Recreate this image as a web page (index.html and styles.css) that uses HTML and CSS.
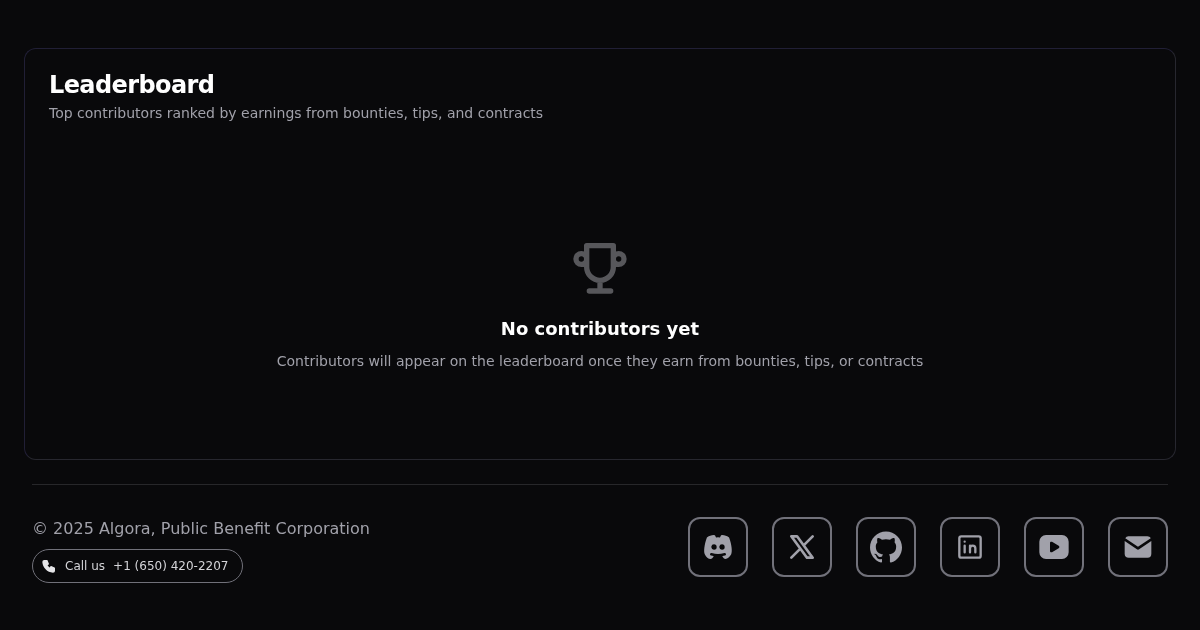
FILE: index.html
```html
<!DOCTYPE html>
<html lang="en">
<head>
    <meta charset="UTF-8">
    <meta name="viewport" content="width=device-width, initial-scale=1.0">
    <title>Leaderboard</title>
    <link rel="stylesheet" href="styles.css">
</head>
<body>
    <main class="page">
        <section class="card">
            <h1>Leaderboard</h1>
            <p class="subtitle">Top contributors ranked by earnings from bounties, tips, and contracts</p>
            <div class="empty">
                <svg class="trophy" viewBox="0 0 24 24" fill="none" stroke="currentColor" stroke-width="2" stroke-linecap="round" stroke-linejoin="round">
                    <path d="M8 21h8M12 17v4M7 4h10M17 4v8a5 5 0 0 1 -10 0v-8M3 9a2 2 0 1 0 4 0a2 2 0 1 0 -4 0M17 9a2 2 0 1 0 4 0a2 2 0 1 0 -4 0"/>
                </svg>
                <h2>No contributors yet</h2>
                <p>Contributors will appear on the leaderboard once they earn from bounties, tips, or contracts</p>
            </div>
        </section>
    </main>

    <footer class="footer">
        <div class="footer-inner">
            <div class="contact">
                <div class="copyright">© 2025 Algora, Public Benefit Corporation</div>
                <a class="call" href="#">
                    <svg class="phone" viewBox="0 0 24 24" fill="currentColor"><path d="M9 3a1 1 0 0 1 .877 .519l.051 .11l2 5a1 1 0 0 1 -.313 1.16l-.1 .068l-1.674 1.004l.063 .103a10 10 0 0 0 3.132 3.132l.102 .062l1.005 -1.672a1 1 0 0 1 1.113 -.453l.115 .039l5 2a1 1 0 0 1 .622 .807l.007 .121v4c0 1.657 -1.343 3 -3.06 2.998c-8.579 -.521 -15.418 -7.36 -15.94 -15.998a3 3 0 0 1 2.824 -2.995l.176 -.005h4z"/></svg>
                    <span>Call us</span>
                    <span>+1 (650) 420-2207</span>
                </a>
            </div>
            <nav class="socials">
                <a class="social" href="#" aria-label="Discord">
                    <svg viewBox="0 0 24 24" fill="currentColor"><path d="M14.983 3l.123 .006c2.014 .214 3.527 .672 4.966 1.673a1 1 0 0 1 .371 .488c1.876 5.315 2.373 9.987 1.451 12.28c-1.003 2.005 -2.606 3.553 -4.394 3.553c-.732 0 -1.693 -.968 -2.328 -2.045a21.512 21.512 0 0 0 2.103 -.493a1 1 0 1 0 -.55 -1.924c-3.32 .95 -6.13 .95 -9.45 0a1 1 0 0 0 -.55 1.924c.717 .204 1.416 .37 2.103 .494c-.635 1.076 -1.596 2.044 -2.328 2.044c-1.788 0 -3.391 -1.548 -4.428 -3.629c-.888 -2.217 -.39 -6.89 1.485 -12.204a1 1 0 0 1 .371 -.488c1.439 -1.001 2.952 -1.459 4.966 -1.673a1 1 0 0 1 .935 .435l.063 .107l.651 1.285l.137 -.016a12.97 12.97 0 0 1 2.643 0l.134 .016l.65 -1.284a1 1 0 0 1 .754 -.54l.122 -.009zm-5.983 7a2 2 0 0 0 -1.977 1.697l-.018 .154l-.005 .149l.005 .15a2 2 0 1 0 1.995 -2.15zm6 0a2 2 0 0 0 -1.977 1.697l-.018 .154l-.005 .149l.005 .15a2 2 0 1 0 1.995 -2.15z"/></svg>
                </a>
                <a class="social" href="#" aria-label="X">
                    <svg viewBox="0 0 24 24" fill="none" stroke="currentColor" stroke-width="2" stroke-linecap="round" stroke-linejoin="round"><path d="M4 4l11.733 16h4.267l-11.733 -16zM4 20l6.768 -6.768m2.46 -2.46l6.772 -6.772"/></svg>
                </a>
                <a class="social" href="#" aria-label="GitHub">
                    <svg viewBox="0 0 24 24" fill="currentColor"><path d="M12 .297c-6.63 0-12 5.373-12 12 0 5.303 3.438 9.8 8.205 11.385.6.113.82-.258.82-.577 0-.285-.01-1.04-.015-2.04-3.338.724-4.042-1.61-4.042-1.61C4.422 18.07 3.633 17.7 3.633 17.7c-1.087-.744.084-.729.084-.729 1.205.084 1.838 1.236 1.838 1.236 1.07 1.835 2.809 1.305 3.495.998.108-.776.417-1.305.76-1.605-2.665-.3-5.466-1.332-5.466-5.93 0-1.31.465-2.38 1.235-3.22-.135-.303-.54-1.523.105-3.176 0 0 1.005-.322 3.3 1.23.96-.267 1.98-.399 3-.405 1.02.006 2.04.138 3 .405 2.28-1.552 3.285-1.23 3.285-1.23.645 1.653.24 2.873.12 3.176.765.84 1.23 1.91 1.23 3.22 0 4.61-2.805 5.625-5.475 5.92.42.36.81 1.096.81 2.22 0 1.606-.015 2.896-.015 3.286 0 .315.21.69.825.57C20.565 22.092 24 17.592 24 12.297c0-6.627-5.373-12-12-12"/></svg>
                </a>
                <a class="social" href="#" aria-label="LinkedIn">
                    <svg viewBox="0 0 24 24" fill="none" stroke="currentColor" stroke-width="1.75" stroke-linecap="round" stroke-linejoin="round"><rect x="4" y="4" width="16" height="16" rx="1.5"/><path d="M8 11v5M8 8v.01M12 16v-5M16 16v-3a2 2 0 1 0 -4 0"/></svg>
                </a>
                <a class="social" href="#" aria-label="YouTube">
                    <svg viewBox="0 0 24 24" fill="currentColor"><path d="M18 3a5 5 0 0 1 5 5v8a5 5 0 0 1 -5 5h-12a5 5 0 0 1 -5 -5v-8a5 5 0 0 1 5 -5zm-9 6v6a1 1 0 0 0 1.514 .857l5 -3a1 1 0 0 0 0 -1.714l-5 -3a1 1 0 0 0 -1.514 .857z"/></svg>
                </a>
                <a class="social" href="#" aria-label="Email">
                    <svg viewBox="0 0 24 24" fill="currentColor"><path d="M22 7.535v9.465a3 3 0 0 1 -2.824 2.995l-.176 .005h-14a3 3 0 0 1 -2.995 -2.824l-.005 -.176v-9.465l9.445 6.297l.116 .066a1 1 0 0 0 .878 0l.116 -.066l9.445 -6.297zM19 4c1.08 0 2.027 .57 2.555 1.427l-9.555 6.37l-9.555 -6.37a2.999 2.999 0 0 1 2.354 -1.42l.201 -.007h14z"/></svg>
                </a>
            </nav>
        </div>
    </footer>
</body>
</html>
```

FILE: styles.css
```css
* { box-sizing: border-box; }
html, body { margin: 0; height: 630px; overflow: hidden; }
body { font-family: "DejaVu Sans", sans-serif; background-color: #09090b; color: #fff; }
a { color: inherit; text-decoration: none; }
h1, h2, p { margin: 0; }

.page { padding: 48px 24px 24px; will-change: transform; }
.card { display: flex; flex-direction: column; height: 412px; padding: 20px 24px 24px; border: 1px solid #27272f; border-top-color: #211f36; border-left-color: #211f36; border-radius: 12px; }
h1 { font-size: 24px; line-height: 32px; font-weight: 700; letter-spacing: -0.6px; }
.subtitle { font-size: 14px; line-height: 24px; color: #a1a1aa; }

.empty { display: flex; flex-direction: column; align-items: center; padding-top: 110px; }
.trophy { width: 64px; height: 64px; color: #57575b; }
.empty h2 { margin-top: 16px; font-size: 18px; line-height: 28px; font-weight: 700; }
.empty p { margin-top: 8px; font-size: 14px; line-height: 20px; color: #a1a1aa; }

.footer { padding: 0 32px; will-change: transform; }
.footer-inner { display: flex; justify-content: space-between; align-items: flex-start; padding-top: 31px; border-top: 1px solid #27272a; }
.contact { display: flex; flex-direction: column; align-items: flex-start; }
.copyright { margin-top: 1px; font-size: 16px; line-height: 24px; color: #a1a1aa; }
.call { display: flex; align-items: center; gap: 8px; height: 34px; margin-top: 8px; padding: 0 14px 0 8px; font-size: 12px; color: #d4d4d8; border: 1px solid #71717a; border-radius: 17px; }
.phone { width: 16px; height: 16px; color: #e4e4e7; }

.socials { display: flex; gap: 24px; margin-top: 1px; }
.social { display: flex; align-items: center; justify-content: center; width: 60px; height: 60px; color: #a1a1aa; border: 2px solid #71717a; border-radius: 12px; }
.social svg { width: 32px; height: 32px; }
```
